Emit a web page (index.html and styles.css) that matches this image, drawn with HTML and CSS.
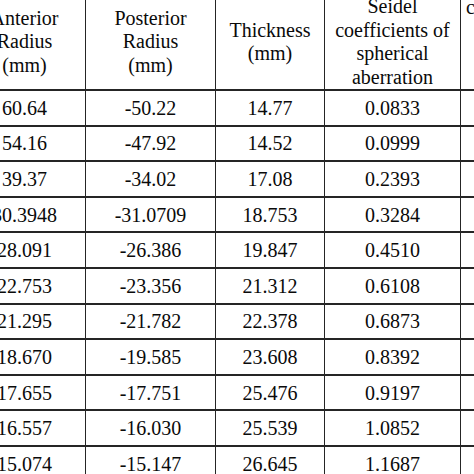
FILE: index.html
```html
<!DOCTYPE html>
<html>
<head>
<meta charset="utf-8">
<link rel="stylesheet" href="styles.css">
</head>
<body>
<div class="frame">
<table class="lens">
  <colgroup>
    <col class="c1"><col class="c2"><col class="c3"><col class="c4"><col class="c5">
  </colgroup>
  <thead>
    <tr>
      <th>Anterior<br>Radius<br>(mm)</th>
      <th>Posterior<br>Radius<br>(mm)</th>
      <th>Thickness<br>(mm)</th>
      <th>Seidel<br>coefficients of<br>spherical<br>aberration</th>
      <th class="extra">c</th>
    </tr>
  </thead>
  <tbody>
    <tr><td>60.64</td><td>-50.22</td><td>14.77</td><td>0.0833</td><td></td></tr>
    <tr><td>54.16</td><td>-47.92</td><td>14.52</td><td>0.0999</td><td></td></tr>
    <tr><td>39.37</td><td>-34.02</td><td>17.08</td><td>0.2393</td><td></td></tr>
    <tr><td>30.3948</td><td>-31.0709</td><td>18.753</td><td>0.3284</td><td></td></tr>
    <tr><td>28.091</td><td>-26.386</td><td>19.847</td><td>0.4510</td><td></td></tr>
    <tr><td>22.753</td><td>-23.356</td><td>21.312</td><td>0.6108</td><td></td></tr>
    <tr><td>21.295</td><td>-21.782</td><td>22.378</td><td>0.6873</td><td></td></tr>
    <tr><td>18.670</td><td>-19.585</td><td>23.608</td><td>0.8392</td><td></td></tr>
    <tr><td>17.655</td><td>-17.751</td><td>25.476</td><td>0.9197</td><td></td></tr>
    <tr><td>16.557</td><td>-16.030</td><td>25.539</td><td>1.0852</td><td></td></tr>
    <tr><td>15.074</td><td>-15.147</td><td>26.645</td><td>1.1687</td><td></td></tr>
  </tbody>
</table>
</div>
</body>
</html>
```
FILE: styles.css
```css
html, body {
  margin: 0;
  padding: 0;
  background: #fff;
}
.frame {
  width: 474px;
  height: 474px;
  overflow: hidden;
}
.lens {
  table-layout: fixed;
  border-collapse: collapse;
  width: 626px;
  margin-top: -9px;
  margin-left: -37px;
  font-family: "Liberation Serif", "Times New Roman", serif;
  font-size: 20px;
  color: #0a0a0a;
}
.c1 { width: 122px; }
.c2 { width: 130px; }
.c3 { width: 109px; }
.c4 { width: 136px; }
.c5 { width: 129px; }
.lens th, .lens td {
  border-top: 2px solid #252525;
  border-bottom: 2px solid #252525;
  border-left: 1.5px solid #252525;
  border-right: 1.5px solid #252525;
  text-align: center;
  vertical-align: middle;
  padding: 0;
  font-weight: normal;
}
.lens th {
  line-height: 23.5px;
  padding-top: 2px;
}
.lens td {
  height: 33.6px;
  line-height: 22px;
}
.lens th.extra {
  text-align: left;
  vertical-align: top;
  padding-left: 5px;
  padding-top: 10px;
  line-height: 8px;
}
```
